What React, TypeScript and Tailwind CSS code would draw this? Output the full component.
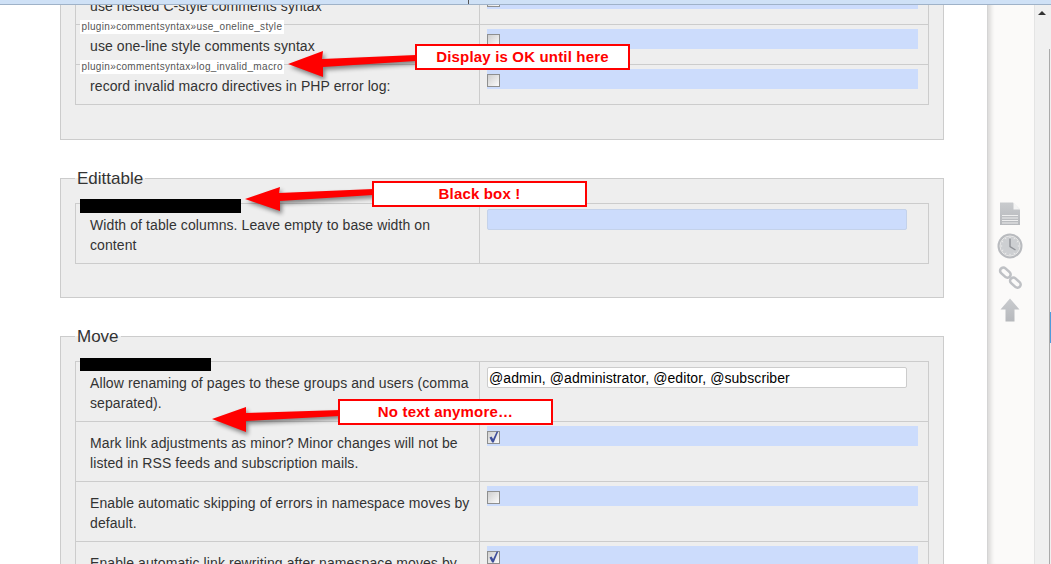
type RowProps = {
  text: string
  tag?: string
  blackWidth?: string
  blackHeight?: string
  checked?: boolean
  tall?: boolean
  input?: 'blue' | 'white'
  value?: string
}

function Checkbox({ checked }: { checked?: boolean }) {
  return (
    <div className="relative w-[13px] h-[13px] border border-[#8e8f8f] bg-gradient-to-br from-[#cfcfcf] to-[#fbfbfb]">
      {checked && (
        <svg className="absolute -left-px -top-[2px]" width="13" height="14" viewBox="0 0 13 14">
          <path d="M2.5 7.5l2-1 1.6 2.6 3.6-7.6h1.6l-4.6 11h-1.6z" fill="#3f4f9c" />
        </svg>
      )}
    </div>
  )
}

function Row({ text, tag, blackWidth, blackHeight, checked, tall, input, value }: RowProps) {
  return (
    <div className={`relative flex border-t border-[#cccccc] ${tall ? 'h-[60px]' : 'h-[40px]'}`}>
      {tag && (
        <span className="absolute left-1 -top-[5px] h-[14px] px-[1.5px] bg-white text-[10px] leading-[14px] tracking-[0.34px] text-[#555555]">
          {tag}
        </span>
      )}
      {blackWidth && <div className={`absolute left-1 bg-black ${blackWidth} ${blackHeight}`} />}
      <div className="w-[404px] shrink-0 border-r border-[#cccccc] pl-[14px] pr-2 pt-[11px] text-[14px] leading-5 tracking-[0.09px] text-[#333333]">
        {text}
      </div>
      <div className="pl-[7px]">
        {input === 'blue' && (
          <div className="mt-[5px] w-[420px] h-[21px] rounded-[2px] border border-[#c4d2ea] bg-[#ccdcfc]" />
        )}
        {input === 'white' && (
          <div className="mt-[5px] w-[420px] h-[21px] rounded-[2px] border border-[#cccccc] bg-white px-px text-[14px] leading-[21px] tracking-[0.08px] text-black">
            {value}
          </div>
        )}
        {!input && (
          <div className="mt-[4px] w-[431px] h-5 pt-[5px] bg-[#ccdcfc]">
            <Checkbox checked={checked} />
          </div>
        )}
      </div>
    </div>
  )
}

function Callout({ text, className }: { text: string; className: string }) {
  return (
    <div className={`absolute w-[215px] h-[26px] border-2 border-[#ff0000] bg-white text-center text-[15px] font-bold leading-[21px] tracking-[0.17px] text-[#ff0000] ${className}`}>
      {text}
    </div>
  )
}

function Arrow({ className, points }: { className: string; points: string }) {
  return (
    <svg className={`absolute drop-shadow-[2px_3px_2px_rgba(0,0,0,0.45)] ${className}`} width="140" height="40" viewBox="0 0 140 40">
      <polygon points={points} fill="#ff0000" />
    </svg>
  )
}

function PageIcons() {
  return (
    <>
      <svg width="24" height="24" viewBox="0 0 24 24">
        <defs>
          <linearGradient id="tool" x1="0" y1="0" x2="0" y2="1">
            <stop offset="0" stopColor="#c9cbce" />
            <stop offset="1" stopColor="#b6b8bc" />
          </linearGradient>
        </defs>
        <path d="M2 0.5h13l7 7v15.5h-20z" fill="url(#tool)" />
        <path d="M15.5 0.5l6.5 7h-6.5z" fill="#f4f4f4" />
        <path d="M4 13.5h16M4 16h16M4 18.5h16M4 21h16" stroke="#f4f4f4" strokeWidth="0.9" />
      </svg>
      <svg className="mt-[7px]" width="26" height="26" viewBox="0 0 26 26">
        <circle cx="13" cy="13" r="12.5" fill="#b9bbbf" />
        <circle cx="13" cy="13" r="10" fill="#cdcfd2" stroke="#e6e6e6" />
        <path d="M13 5.5v8l5.5 3.5" fill="none" stroke="#8f9196" strokeWidth="1.4" />
        <path d="M13 3.8v1.4M13 20.8v1.4M3.8 13h1.4M20.8 13h1.4M8.4 5l.7 1.2M17.6 5l-.7 1.2M5 8.4l1.2.7M21 8.4l-1.2.7M5 17.6l1.2-.7M8.4 21l.7-1.2M17.6 21l-.7-1.2" stroke="#f2f2f2" strokeWidth="0.9" />
      </svg>
      <svg className="mt-[6px]" width="25" height="25" viewBox="0 0 25 25">
        <g fill="none" stroke="#bfc1c5" strokeWidth="2.6">
          <rect x="-6" y="-3" width="12" height="6.4" rx="3.2" transform="translate(7.5 7.5) rotate(42)" />
          <rect x="-6" y="-3" width="12" height="6.4" rx="3.2" transform="translate(17.5 17.5) rotate(42)" />
        </g>
      </svg>
      <svg className="mt-[8px]" width="20" height="24" viewBox="0 0 20 24">
        <path d="M10 0.5l9.5 11h-5v12h-9v-12h-5z" fill="url(#tool)" />
      </svg>
    </>
  )
}

export default function App() {
  return (
    <div className="relative flex w-[1051px] h-[564px] overflow-hidden bg-white font-['Liberation_Sans',Arial,sans-serif]">
      {/* browser bar clipped at top */}
      <div className="absolute inset-x-0 top-0 z-10 h-[5px] border-b border-[#9fb2c8] bg-[#cfe1f6]">
        <div className="ml-[468px] h-1 w-px bg-[#555555]" />
      </div>

      <main className="w-[987px] shrink-0 pl-[60px]">
        <div className="-mt-[40px] w-[884px]">
          {/* first section, scrolled out */}
          <div className="border border-[#cccccc] bg-[#eeeeee] px-[14px] pt-[23px] pb-[34px]">
            <div className="border-x border-b border-[#cccccc]">
              <Row text="use nested C-style comments syntax" />
              <Row text="use one-line style comments syntax" tag="plugin»commentsyntax»use_oneline_style" />
              <Row text="record invalid macro directives in PHP error log:" tag="plugin»commentsyntax»log_invalid_macro" />
            </div>
          </div>

          <fieldset className="mt-[28px] border border-[#cccccc] bg-[#eeeeee] px-[14px] pt-[15px] pb-[33px]">
            <legend className="px-[2px] pt-[2px] text-[17px] leading-[18px] text-[#333333]">Edittable</legend>
            <div className="border-x border-b border-[#cccccc]">
              <Row text="Width of table columns. Leave empty to base width on content" tall input="blue" blackWidth="w-[161px]" blackHeight="-top-[5px] h-[14px]" />
            </div>
          </fieldset>

          <fieldset className="mt-[28px] border border-[#cccccc] bg-[#eeeeee] px-[14px] pt-[15px] pb-[33px]">
            <legend className="px-[2px] pt-[2px] text-[17px] leading-[18px] text-[#333333]">Move</legend>
            <div className="border-x border-b border-[#cccccc]">
              <Row text="Allow renaming of pages to these groups and users (comma separated)." tall input="white" value="@admin, @administrator, @editor, @subscriber" blackWidth="w-[131px]" blackHeight="-top-[4px] h-[13px]" />
              <Row text="Mark link adjustments as minor? Minor changes will not be listed in RSS feeds and subscription mails." tall checked />
              <Row text="Enable automatic skipping of errors in namespace moves by default." tall />
              <Row text="Enable automatic link rewriting after namespace moves by default." tall checked />
            </div>
          </fieldset>
        </div>
      </main>

      {/* page tools */}
      <aside className="w-[47px] shrink-0 border-l border-[#d4d4d4] bg-[#fbfaf9] pt-[202px] pr-[2px] flex flex-col items-center shadow-[inset_6px_0_4px_-3px_rgba(0,0,0,0.13)]">
        <PageIcons />
      </aside>

      {/* scrollbar */}
      <div className="relative w-[15px] shrink-0 border-l border-[#e4e4e4] bg-[#f0f0f0] pt-[11px] flex justify-center">
        <div className="h-0 w-0 border-x-[4px] border-b-[4px] border-x-transparent border-b-[#333333]" />
      </div>
      <div className="flex w-[2px] shrink-0 flex-col bg-[#f0f0f0] pt-[49px]">
        <div className="flex flex-1 border-l border-[#aaaaaa] pt-[263px]">
          <div className="h-[31px] w-px bg-[#4f9bdc]" />
        </div>
      </div>

      {/* annotations */}
      <Arrow className="left-[286px] top-[44px]" points="2,20 37,7 36,15 130,11 130,17 37,23 37,33" />
      <Callout text="Display is OK until here" className="left-[415px] top-[44px]" />
      <Arrow className="left-[243px] top-[180px]" points="2,19 37,7 36,13 130,9 130,15 37,21 37,31" />
      <Callout text="Black box !" className="left-[372px] top-[181px]" />
      <Arrow className="left-[210px] top-[400px]" points="2,19 36,7 36,13 130,10 130,16 36,21 36,32" />
      <Callout text="No text anymore…" className="left-[338px] top-[399px]" />
    </div>
  )
}
